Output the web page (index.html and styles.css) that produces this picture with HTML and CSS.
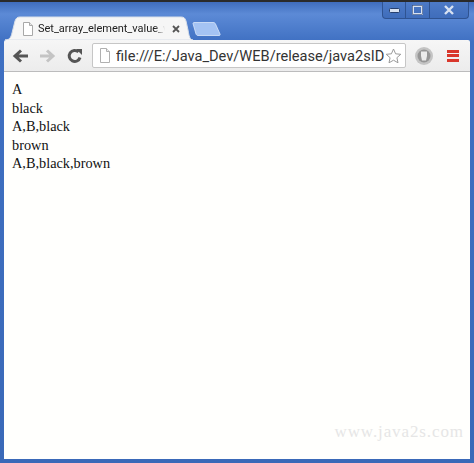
FILE: index.html
```html
<!DOCTYPE html>
<html lang="en">
<head>
<meta charset="utf-8">
<title>Set_array_element_value</title>
<link rel="stylesheet" href="styles.css">
</head>
<body>
<div class="window">
  <div class="titlebar">
    <div class="tab">
      <svg class="tab-shape" width="188" height="24" viewBox="0 0 188 24"><path d="M0 24C5 24 6 21 7 17L10 5C11 2 12.500 1 15 1H176C179 1 180 2 181 5L183 14C184 20 185 24 188 24Z" fill="#f6f6f6" stroke="#d8dfe9" stroke-width="1"/></svg>
      <svg class="page-icon" width="12" height="14" viewBox="0 0 12 14"><path d="M1.500 .5H7.500L10.500 3.500V13.500H1.500Z" fill="#fff" stroke="#a8a8a8"/><path d="M7.500 .5V3.500H10.500" fill="#e6e6e6" stroke="#a8a8a8"/></svg>
      <span class="tab-title">Set_array_element_value_v</span>
      <svg class="tab-close" width="8" height="8" viewBox="0 0 8 8"><path d="M1 1L7 7M7 1L1 7" stroke="#555" stroke-width="1.800"/></svg>
    </div>
    <svg class="new-tab" width="29" height="14" viewBox="0 0 29 14"><path d="M1 1.500C1 1 1.500 .5 2 .5H21C22.500 .5 23 1 23.500 2L28 12C28.300 13 28 13.500 27 13.500H6C5 13.500 4.500 13 4 12Z" fill="#a4c3f3" stroke="#dbe7fa" stroke-width=".8"/></svg>
    <div class="controls">
      <div class="ctl ctl-min"><svg width="11" height="5" viewBox="0 0 11 5"><rect x=".5" y=".5" width="10" height="4" rx="1" fill="#d8e2f2" stroke="#27406f"/></svg></div>
      <div class="ctl ctl-max"><svg width="11" height="10" viewBox="0 0 11 10"><rect x="1" y="1" width="9" height="8" fill="none" stroke="#d8e2f2" stroke-width="2"/><rect x=".5" y=".5" width="10" height="9" fill="none" stroke="#27406f" stroke-width=".6"/></svg></div>
      <div class="ctl ctl-close"><svg width="12" height="10" viewBox="0 0 12 10"><path d="M2 1L10 9M10 1L2 9" stroke="#d8e2f2" stroke-width="2.400"/></svg></div>
    </div>
  </div>
  <div class="toolbar">
    <svg class="nav" width="18" height="16" viewBox="0 0 18 16"><path d="M16 8H4M9 2.500L3 8L9 13.500" fill="none" stroke="#555" stroke-width="3"/></svg>
    <svg class="nav" width="18" height="16" viewBox="0 0 18 16"><path d="M2 8H14M9 2.500L15 8L9 13.500" fill="none" stroke="#c4c4c4" stroke-width="3"/></svg>
    <svg class="nav" width="16" height="16" viewBox="0 0 16 16"><path d="M13 9.500A5.500 5.500 0 1 1 11.500 4" fill="none" stroke="#555" stroke-width="3"/><path d="M9 1H15V7Z" fill="#555"/></svg>
    <div class="omnibox">
      <svg width="12" height="15" viewBox="0 0 12 15"><path d="M1.500 .5H7.500L10.500 3.500V14.500H1.500Z" fill="#fff" stroke="#b0b0b0"/><path d="M7.500 .5V3.500H10.500" fill="#eee" stroke="#b0b0b0"/></svg>
      <span class="url">file:///E:/Java_Dev/WEB/release/java2sIDE</span>
      <svg class="star" width="17" height="16" viewBox="0 0 17 16"><path d="M8.500 1L10.600 5.800L15.800 6.300L11.900 9.700L13 14.800L8.500 12.200L4 14.800L5.100 9.700L1.200 6.300L6.400 5.800Z" fill="#fff" stroke="#9a9a9a"/></svg>
    </div>
    <svg class="ext" width="20" height="20" viewBox="0 0 20 20"><circle cx="10" cy="10" r="9" fill="#c4c4c4"/><circle cx="10" cy="10" r="6.500" fill="#969696"/><path d="M7 10V5.500H13V10L12 14.500H8Z" fill="#ececec"/></svg>
    <div class="menu"><span></span><span></span><span></span></div>
  </div>
  <main class="content">
    <div>A</div>
    <div>black</div>
    <div>A,B,black</div>
    <div>brown</div>
    <div>A,B,black,brown</div>
    <div class="watermark">www.java2s.com</div>
  </main>
</div>
</body>
</html>
```
FILE: styles.css
```css
* { box-sizing: border-box; }
html, body { margin: 0; height: 100%; }
body { background: #3a67b5; overflow: hidden; }
.window {
  width: 474px;
  height: 463px;
  display: flex;
  flex-direction: column;
  padding: 0 4px 4px;
  background: linear-gradient(#3f6cbc 0, #5c8ad6 12px, #3f70c2 40px, #3a69b8 100%);
  border-top: 2px solid #2a2a2a;
}
.titlebar {
  height: 38px;
  display: flex;
  align-items: flex-end;
  flex: none;
  padding-left: 1px;
}
.tab {
  position: relative;
  width: 188px;
  height: 24px;
  display: flex;
  align-items: center;
  padding: 0 0 0 17px;
  flex: none;
}
.tab-shape { position: absolute; left: 0; top: 0; }
.page-icon { position: relative; flex: none; margin-top: 2px; }
.tab-title {
  position: relative;
  font: 11px/16px Roboto, sans-serif;
  letter-spacing: -.02px;
  color: #222;
  margin-left: 4px;
  margin-top: 1px;
  width: 127px;
  overflow: hidden;
  white-space: nowrap;
  flex: none;
  -webkit-mask-image: linear-gradient(90deg, #000 92%, transparent);
  mask-image: linear-gradient(90deg, #000 92%, transparent);
}
.tab-close { position: relative; margin-left: 7px; margin-top: 1px; flex: none; }
.new-tab { margin: 0 0 4px -1px; flex: none; }
.controls {
  margin-left: auto;
  align-self: flex-start;
  display: flex;
  height: 17px;
  margin-right: 1px;
  border: 1px solid #2f5391;
  border-top: 0;
  border-radius: 0 0 4px 4px;
  background: linear-gradient(#4d7ac6, #3f6dbb);
}
.ctl { display: flex; align-items: center; justify-content: center; height: 100%; border-right: 1px solid #2f5391; }
.ctl:last-child { border-right: 0; }
.ctl-min { width: 23px; }
.ctl-max { width: 24px; }
.ctl-close { width: 38px; }
.toolbar {
  height: 32px;
  flex: none;
  display: flex;
  align-items: center;
  background: linear-gradient(#f6f6f6, #ececec);
  border-bottom: 1px solid #bcbcbc;
  border-radius: 2px 2px 0 0;
  padding: 0 8px 0 8px;
}
.nav { flex: none; margin-right: 8px; }
.nav + .nav + .nav { margin-right: 9px; margin-left: 3px; }
.omnibox {
  flex: none;
  width: 314px;
  height: 25px;
  background: #fff;
  border: 1px solid #c6c6c6;
  border-radius: 2px;
  display: flex;
  align-items: center;
  padding: 0 3px 0 6px;
}
.omnibox svg { flex: none; }
.url {
  font: 14.600px/24px Roboto, sans-serif;
  color: #333;
  white-space: nowrap;
  overflow: hidden;
  width: 268px;
  flex: none;
  margin-left: 5px;
}
.star { margin-left: 1px; }
.ext { flex: none; margin-left: 8px; }
.menu { margin-left: 13px; display: flex; flex-direction: column; gap: 1.500px; flex: none; }
.menu span { display: block; width: 12px; height: 3px; background: #d9372c; }
.content {
  position: relative;
  flex: 1;
  background: #fffffd;
  padding: 8px 8px;
  font: 14.300px/18.500px "Liberation Serif", serif;
  color: #111;
}
.watermark {
  position: absolute;
  right: 6px;
  bottom: 17px;
  font: 17px/20px "Liberation Serif", serif;
  letter-spacing: .9px;
  color: #e6e6e6;
}
```
